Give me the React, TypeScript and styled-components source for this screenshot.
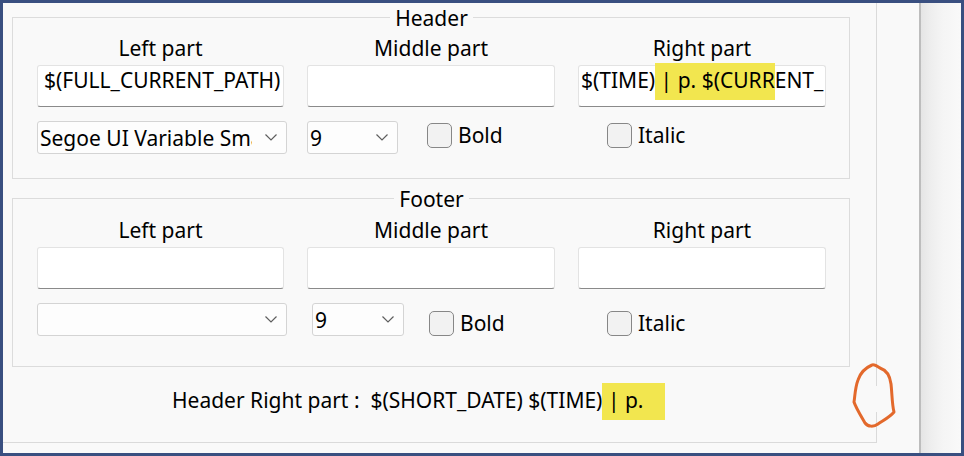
import React from 'react';
import styled, { createGlobalStyle } from 'styled-components';

const GlobalStyle = createGlobalStyle`
  html, body {
    margin: 0;
    padding: 0;
    background: #f9f9f9;
  }
  body {
    font-family: 'Noto Sans', 'Open Sans', sans-serif;
    font-size: 21px;
    color: #000;
  }
`;

const Frame = styled.div`
  position: relative;
  width: 964px;
  height: 456px;
  box-sizing: border-box;
  border: 3px solid #394f80;
  background: #f9f9f9;
  display: flex;
  overflow: hidden;
`;

// right edge of the panel has a small break near the bottom
const Panel = styled.div`
  width: 874px;
  height: 440px;
  flex-shrink: 0;
  box-sizing: border-box;
  padding: 2px 0 0 9px;
  border-bottom: 1px solid #dadada;
  background:
    linear-gradient(#dadada, #dadada) right top / 1px 383px no-repeat,
    linear-gradient(#dadada, #dadada) right bottom / 1px 30px no-repeat;
  display: flex;
  flex-direction: column;
`;

const Gutter = styled.div`
  width: 42px;
  flex-shrink: 0;
`;

const EdgeShade = styled.div`
  width: 42px;
  flex-shrink: 0;
  box-sizing: border-box;
  border-left: 2px solid #bdbdbd;
  background: linear-gradient(90deg, #e5e5e5 0%, #eeeeee 25%, #f5f5f5 55%, #f9f9f9 100%);
`;

const Group = styled.fieldset<{ $top?: number; $padTop: number; $padBottom: number }>`
  width: 838px;
  min-width: 0;
  box-sizing: border-box;
  margin: ${(p) => p.$top ?? 0}px 0 0;
  padding: ${(p) => p.$padTop}px 23px ${(p) => p.$padBottom}px 24px;
  border: 1px solid #dcdcdc;
`;

const Legend = styled.legend`
  margin: 0 auto;
  padding: 2px 5px 0;
  line-height: 22px;
`;

const Columns = styled.div`
  display: grid;
  grid-template-columns: 247px 248px 248px;
  column-gap: 23px;
`;

const Column = styled.div`
  display: flex;
  flex-direction: column;
  gap: 5px;
`;

const ColumnLabel = styled.div`
  text-align: center;
  line-height: 24px;
`;

const TextField = styled.div<{ $inset?: number }>`
  height: 42px;
  box-sizing: border-box;
  background: #fff;
  border: 1px solid #e3e3e3;
  border-bottom-color: #8a8a8a;
  border-radius: 3px;
  padding-left: ${(p) => p.$inset ?? 6}px;
  line-height: 28px;
  white-space: pre;
  overflow-x: clip;
`;

const Highlight = styled.mark<{ $trail?: number }>`
  background: #f2e64f;
  color: inherit;
  padding: 3px ${(p) => p.$trail ?? 0}px 6px 0;
`;

const OptionRow = styled.div`
  display: flex;
  align-items: flex-start;
  margin-top: 14px;
`;

const Combo = styled.div<{ $width: number; $offset?: number }>`
  width: ${(p) => p.$width}px;
  margin-left: ${(p) => p.$offset ?? 0}px;
  height: 33px;
  box-sizing: border-box;
  border: 1px solid #d4d4d4;
  border-radius: 3px;
  background: #fdfdfd;
  display: flex;
  align-items: center;
  gap: 13px;
  padding: 0 9px 0 2px;
  line-height: 28px;
`;

const ComboText = styled.span`
  flex: 1;
  min-width: 0;
  overflow: hidden;
  white-space: nowrap;
`;

const CheckItem = styled.label<{ $offset?: number; $width?: number; $drop: number }>`
  display: flex;
  align-items: center;
  gap: 6px;
  margin-left: ${(p) => p.$offset ?? 0}px;
  margin-top: ${(p) => p.$drop}px;
  width: ${(p) => (p.$width ? `${p.$width}px` : 'auto')};
  line-height: 25px;
`;

const CheckBox = styled.span`
  width: 25px;
  height: 25px;
  box-sizing: border-box;
  border: 1px solid #878787;
  border-radius: 5px;
  background: #f2f2f2;
`;

const Summary = styled.div`
  margin-top: 21px;
  padding-left: 160px;
  line-height: 24px;
  white-space: pre;
`;

const Annotation = styled.svg`
  position: absolute;
  top: -3px;
  left: -3px;
  pointer-events: none;
`;

const Chevron = () => (
  <svg width="12" height="7" viewBox="0 0 12 7">
    <polyline points="0.5,0.5 6,6 11.5,0.5" fill="none" stroke="#5e5e5e" strokeWidth="1.2" />
  </svg>
);

type RowLayout = {
  sizeOffset: number;
  sizeWidth: number;
  boldOffset: number;
  boldWidth: number;
  drop: number;
};

const Options = ({ font, layout }: { font: string; layout: RowLayout }) => (
  <OptionRow>
    <Combo $width={250}>
      <ComboText>{font}</ComboText>
      <Chevron />
    </Combo>
    <Combo $width={layout.sizeWidth} $offset={layout.sizeOffset}>
      <ComboText>9</ComboText>
      <Chevron />
    </Combo>
    <CheckItem $offset={layout.boldOffset} $width={layout.boldWidth} $drop={layout.drop}>
      <CheckBox />
      Bold
    </CheckItem>
    <CheckItem $drop={layout.drop}>
      <CheckBox />
      Italic
    </CheckItem>
  </OptionRow>
);

const App = () => (
  <>
    <GlobalStyle />
    <Frame>
      <Panel>
        <Group $padTop={7} $padBottom={24}>
          <Legend>Header</Legend>
          <Columns>
            <Column>
              <ColumnLabel>Left part</ColumnLabel>
              <TextField>$(FULL_CURRENT_PATH)</TextField>
            </Column>
            <Column>
              <ColumnLabel>Middle part</ColumnLabel>
              <TextField />
            </Column>
            <Column>
              <ColumnLabel>Right part</ColumnLabel>
              <TextField $inset={2}>
                $(TIME)<Highlight> | p. $(CURR</Highlight>ENT_
              </TextField>
            </Column>
          </Columns>
          <Options
            font="Segoe UI Variable Small"
            layout={{ sizeOffset: 20, sizeWidth: 91, boldOffset: 29, boldWidth: 180, drop: 2 }}
          />
        </Group>

        <Group $top={7} $padTop={8} $padBottom={30}>
          <Legend>Footer</Legend>
          <Columns>
            <Column>
              <ColumnLabel>Left part</ColumnLabel>
              <TextField />
            </Column>
            <Column>
              <ColumnLabel>Middle part</ColumnLabel>
              <TextField />
            </Column>
            <Column>
              <ColumnLabel>Right part</ColumnLabel>
              <TextField />
            </Column>
          </Columns>
          <Options
            font=""
            layout={{ sizeOffset: 25, sizeWidth: 92, boldOffset: 25, boldWidth: 178, drop: 8 }}
          />
        </Group>

        <Summary>
          Header Right part :  $(SHORT_DATE) $(TIME)<Highlight $trail={22}> | p.</Highlight>
        </Summary>
      </Panel>
      <Gutter />
      <EdgeShade />

      <Annotation width="964" height="456" viewBox="0 0 964 456">
        <path
          d="M 872 365 C 865 368, 860 374, 858 380 C 855 388, 855 396, 854 402 C 856 408, 861 416, 865 423 C 868 427, 874 427, 878 424 C 884 420, 890 417, 894 412 C 892 405, 892 392, 891 384 C 890 376, 886 370, 880 368 C 877 366, 874 364, 872 365 Z"
          fill="none"
          stroke="#e3692c"
          strokeWidth="3"
          strokeLinecap="round"
          strokeLinejoin="round"
        />
      </Annotation>
    </Frame>
  </>
);

export default App;
